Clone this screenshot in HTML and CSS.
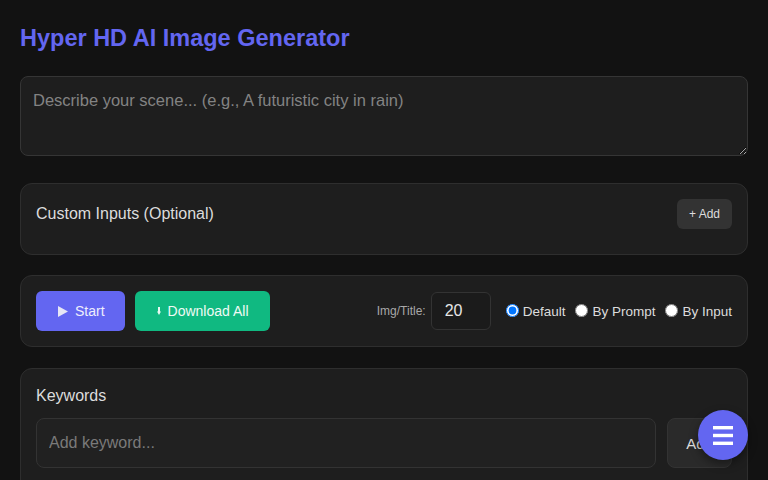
FILE: index.html
```html
<!DOCTYPE html>
<html lang="en">
<head>
    <meta charset="UTF-8">
    <meta name="viewport" content="width=device-width, initial-scale=1.0">
    <title>Hyper HD AI Image Generator</title>
    <link rel="stylesheet" href="styles.css">
</head>
<body>
    <h1 class="title">Hyper HD AI Image Generator</h1>

    <textarea class="prompt" placeholder="Describe your scene... (e.g., A futuristic city in rain)"></textarea>

    <div class="card">
        <div class="card-header">
            <h3>Custom Inputs (Optional)</h3>
            <button class="btn-small">+ Add</button>
        </div>
        <div class="custom-list"></div>
    </div>

    <div class="card controls">
        <div class="actions">
            <button class="btn btn-start">
                <svg width="10" height="11" viewBox="0 0 10 11"><path d="M0 0 L10 5.5 L0 11 Z" fill="#e6e6f5"/></svg>
                Start
            </button>
            <button class="btn btn-download">
                <svg width="4" height="8" viewBox="0 0 4 8"><path d="M1 0 H3 V4.5 H4 L2 8 L0 4.5 H1 Z" fill="#e8f8f1"/></svg>
                Download All
            </button>
        </div>
        <div class="options">
            <div class="count-group">
                <span class="count-label">Img/Title:</span>
                <input type="number" class="count-input" value="20">
            </div>
            <label class="radio"><input type="radio" name="mode" checked> Default</label>
            <label class="radio"><input type="radio" name="mode"> By Prompt</label>
            <label class="radio"><input type="radio" name="mode"> By Input</label>
        </div>
    </div>

    <div class="card keywords">
        <h3 class="keywords-title">Keywords</h3>
        <div class="keyword-row">
            <input type="text" class="keyword-input" placeholder="Add keyword...">
            <button class="btn-add">Add</button>
        </div>
        <div class="keyword-list"></div>
    </div>

    <button class="fab" aria-label="Menu">
        <svg width="20" height="19" viewBox="0 0 20 19">
            <rect x="0" y="0" width="20" height="3.4" fill="#fff"/>
            <rect x="0" y="7.8" width="20" height="3.4" fill="#fff"/>
            <rect x="0" y="15.6" width="20" height="3.4" fill="#fff"/>
        </svg>
    </button>
</body>
</html>
```

FILE: styles.css
```css
* {
    box-sizing: border-box;
}

body {
    margin: 0;
    padding: 20px;
    background: #121212;
    color: #e0e0e0;
    font-family: "Liberation Sans", Arial, sans-serif;
}

.title {
    margin: 4px 0 24px;
    font-size: 23.5px;
    line-height: 28px;
    font-weight: 700;
    color: #6366f1;
}

.prompt {
    display: block;
    width: 100%;
    height: 80px;
    margin-bottom: 27px;
    padding: 14px 12px 12px;
    background: #1e1e1e;
    border: 1px solid #353535;
    border-radius: 8px;
    color: #e0e0e0;
    font-family: inherit;
    font-size: 16.5px;
    resize: vertical;
    outline: none;
}

.prompt::placeholder {
    color: #838383;
}

.card {
    background: #1e1e1e;
    border: 1px solid #2e2e2e;
    border-radius: 12px;
    padding: 15px;
    margin-bottom: 20px;
}

.card h3 {
    margin: 0;
    font-size: 16px;
    font-weight: 500;
    color: #dcdcdc;
}

.card-header {
    display: flex;
    justify-content: space-between;
    align-items: center;
    margin-bottom: 10px;
}

.btn-small {
    height: 30px;
    padding: 0 12px;
    background: #333;
    border: none;
    border-radius: 6px;
    color: #ddd;
    font-family: inherit;
    font-size: 12px;
}

.controls {
    display: flex;
    justify-content: space-between;
    align-items: center;
}

.actions {
    display: flex;
    gap: 10px;
}

.btn {
    display: flex;
    align-items: center;
    gap: 7px;
    height: 40px;
    padding: 0 21px;
    border: none;
    border-radius: 6px;
    color: #fff;
    font-family: inherit;
    font-size: 14px;
}

.btn-start {
    background: #6366f1;
    color: #eeeefc;
    padding: 0 20px 0 22px;
}

.btn-download {
    background: #10b981;
    color: #effaf5;
    padding: 0 21px 0 22px;
}

.options {
    display: flex;
    align-items: center;
    gap: 10px;
}

.count-group {
    display: flex;
    align-items: center;
    gap: 5px;
    margin-right: 5px;
}

.count-label {
    font-size: 12px;
    color: #a8a8a8;
}

.count-input {
    width: 60px;
    height: 38px;
    padding: 0 13px;
    background: #1b1b1b;
    border: 1px solid #333;
    border-radius: 6px;
    color: #e6e6e6;
    font-family: inherit;
    font-size: 16px;
    outline: none;
    -moz-appearance: textfield;
}

.count-input::-webkit-inner-spin-button,
.count-input::-webkit-outer-spin-button {
    -webkit-appearance: none;
    margin: 0;
}

.radio {
    display: flex;
    align-items: center;
    font-size: 13.5px;
    color: #dcdcdc;
}

.radio input {
    margin: -2px 4px 0 0;
}

.keywords {
    margin-top: 21px;
}

.card .keywords-title {
    line-height: 20px;
    padding-top: 2px;
    margin-bottom: 12px;
}

.keyword-row {
    display: flex;
    gap: 11px;
}

.keyword-input {
    flex: 1;
    height: 50px;
    padding: 0 12px;
    background: #212121;
    border: 1px solid #333;
    border-radius: 8px;
    color: #e0e0e0;
    font-family: inherit;
    font-size: 16px;
    outline: none;
}

.keyword-input::placeholder {
    color: #7a7a7a;
}

.btn-add {
    width: 65px;
    height: 50px;
    background: #2a2a2a;
    border: 1px solid #333;
    border-radius: 8px;
    color: #ddd;
    font-family: inherit;
    font-size: 15px;
}

.keyword-list {
    min-height: 60px;
}

.fab {
    position: fixed;
    right: 20px;
    bottom: 20px;
    width: 50px;
    height: 50px;
    display: flex;
    align-items: center;
    justify-content: center;
    padding: 0;
    background: #6366f1;
    border: none;
    border-radius: 50%;
    box-shadow: 0 4px 10px rgba(0, 0, 0, 0.4);
}
```
